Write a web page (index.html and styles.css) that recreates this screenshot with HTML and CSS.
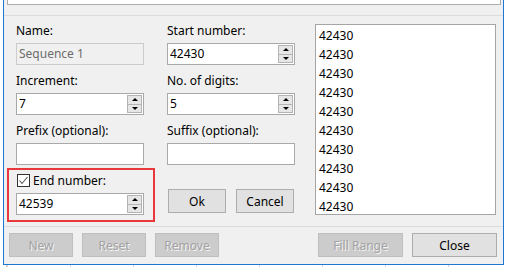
FILE: index.html
```html
<!DOCTYPE html>
<html>
<head>
<meta charset="utf-8">
<link rel="stylesheet" href="styles.css">
</head>
<body>
<div class="window">
  <div class="topbar"><div class="topbox"></div></div>
  <div class="main">
    <div class="form">
      <div class="field">
        <div class="lbl">Name:</div>
        <div class="input disabled"><span class="val">Sequence 1</span></div>
      </div>
      <div class="field">
        <div class="lbl">Start number:</div>
        <div class="input"><span class="val">42430</span><span class="spinner"><span class="sb"><span class="tri up"></span></span><span class="sb"><span class="tri down"></span></span></span></div>
      </div>
      <div class="field">
        <div class="lbl">Increment:</div>
        <div class="input"><span class="val">7</span><span class="spinner"><span class="sb"><span class="tri up"></span></span><span class="sb"><span class="tri down"></span></span></span></div>
      </div>
      <div class="field">
        <div class="lbl">No. of digits:</div>
        <div class="input"><span class="val">5</span><span class="spinner"><span class="sb"><span class="tri up"></span></span><span class="sb"><span class="tri down"></span></span></span></div>
      </div>
      <div class="field">
        <div class="lbl">Prefix (optional):</div>
        <div class="input"><span class="val"></span></div>
      </div>
      <div class="field">
        <div class="lbl">Suffix (optional):</div>
        <div class="input"><span class="val"></span></div>
      </div>
      <div class="endbox">
        <div class="chk">
          <svg class="cb" width="13" height="13" viewBox="0 0 13 13"><rect x="0.5" y="0.5" width="12" height="12" fill="#fff" stroke="#333"/><path d="M2.5 6.5 L5 9.5 L10.5 3" fill="none" stroke="#555" stroke-width="1.1"/></svg>
          <span class="chktext">End number:</span>
        </div>
        <div class="input"><span class="val">42539</span><span class="spinner"><span class="sb"><span class="tri up"></span></span><span class="sb"><span class="tri down"></span></span></span></div>
      </div>
      <div class="okrow">
        <div class="btn okb">Ok</div>
        <div class="btn okb">Cancel</div>
      </div>
    </div>
    <div class="list">
      <div class="item">42430</div>
      <div class="item">42430</div>
      <div class="item">42430</div>
      <div class="item">42430</div>
      <div class="item">42430</div>
      <div class="item">42430</div>
      <div class="item">42430</div>
      <div class="item">42430</div>
      <div class="item">42430</div>
      <div class="item">42430</div>
    </div>
  </div>
  <div class="sep"></div>
  <div class="footer">
    <div class="group">
      <div class="btn dis small">New</div>
      <div class="btn dis small">Reset</div>
      <div class="btn dis small">Remove</div>
    </div>
    <div class="group">
      <div class="btn dis wide">Fill Range</div>
      <div class="btn wide">Close</div>
    </div>
  </div>
</div>
<div class="grid"></div>
</body>
</html>
```
FILE: styles.css
```css
html, body {
  margin: 0;
  padding: 0;
}
body {
  background: #ffffff;
  font-family: "Noto Sans", "DejaVu Sans", sans-serif;
  font-size: 12px;
  color: #000;
  width: 505px;
  height: 267px;
  overflow: hidden;
}
.window {
  margin-left: 3px;
  width: 501px;
  height: 265px;
  box-sizing: border-box;
  border: 1px solid #1c78d2;
  border-top: none;
  background: #f0f0f0;
}
.topbar {
  height: 15px;
  border-bottom: 1px solid #dcdcdc;
}
.topbox {
  margin: 0 2px 0 3px;
  height: 4px;
  background: #fff;
  border: 1px solid #adadad;
  border-top: none;
}
.main {
  display: flex;
  height: 210px;
}
.form {
  display: grid;
  grid-template-columns: 128px 128px;
  grid-auto-rows: 50px;
  column-gap: 23px;
  padding: 7px 0 0 12px;
}
.lbl {
  height: 20px;
  line-height: 16px;
  white-space: nowrap;
}
.input {
  box-sizing: border-box;
  height: 22px;
  border: 1px solid #a9a9a9;
  background: #fff;
  display: flex;
  align-items: center;
}
.input .val {
  flex: 1;
  padding-left: 2px;
  line-height: 16px;
  white-space: nowrap;
}
.input.disabled {
  background: #f0f0f0;
  border-color: #cccccc;
  color: #6d6d6d;
}
.spinner {
  width: 15px;
  height: 18px;
  margin-right: 1px;
  display: flex;
  flex-direction: column;
}
.sb {
  flex: 1;
  box-sizing: border-box;
  background: #e6e6e6;
  border: 1px solid #b4b4b4;
  display: flex;
  align-items: center;
  justify-content: center;
}
.sb + .sb {
  border-top: none;
}
.tri {
  width: 0;
  height: 0;
  border-left: 3px solid transparent;
  border-right: 3px solid transparent;
}
.tri.up {
  border-bottom: 3px solid #000;
}
.tri.down {
  border-top: 3px solid #000;
}
.endbox {
  align-self: start;
  margin: -5px -11px -7px -9px;
  padding: 3px 9px 5px 7px;
  border: 2px solid #e9383d;
}
.chk {
  height: 20px;
  display: flex;
  align-items: flex-start;
}
.cb {
  margin: 1px 0 0 1px;
  flex: none;
}
.chktext {
  margin-left: 3px;
  line-height: 15px;
}
.okrow {
  display: flex;
  gap: 10px;
  padding: 16px 0 0 1px;
}
.btn {
  box-sizing: border-box;
  height: 24px;
  border: 1px solid #adadad;
  background: #e1e1e1;
  display: flex;
  align-items: center;
  justify-content: center;
  white-space: nowrap;
}
.okb {
  width: 58px;
}
.list {
  margin: 8px 0 0 20px;
  width: 181px;
  height: 191px;
  box-sizing: border-box;
  border: 1px solid #a5a5a5;
  background: #fff;
  padding: 1px 0 0 3px;
  overflow: hidden;
}
.item {
  line-height: 19px;
}
.sep {
  height: 1px;
  background: #dcdcdc;
}
.footer {
  height: 37px;
  box-sizing: border-box;
  display: flex;
  justify-content: space-between;
  padding: 6px 6px 0 5px;
}
.group {
  display: flex;
  gap: 9px;
}
.small {
  width: 64px;
}
.wide {
  width: 85px;
}
.btn.dis {
  background: #cccccc;
  border-color: #bfbfbf;
  color: #a2a2a2;
  text-shadow: 1px 1px 0 #f4f4f4;
}
.grid {
  height: 2px;
  background: repeating-linear-gradient(to right, #d4d4d4 0, #d4d4d4 1px, #fff 1px, #fff 63px);
  background-position: 7px 0;
}
```
